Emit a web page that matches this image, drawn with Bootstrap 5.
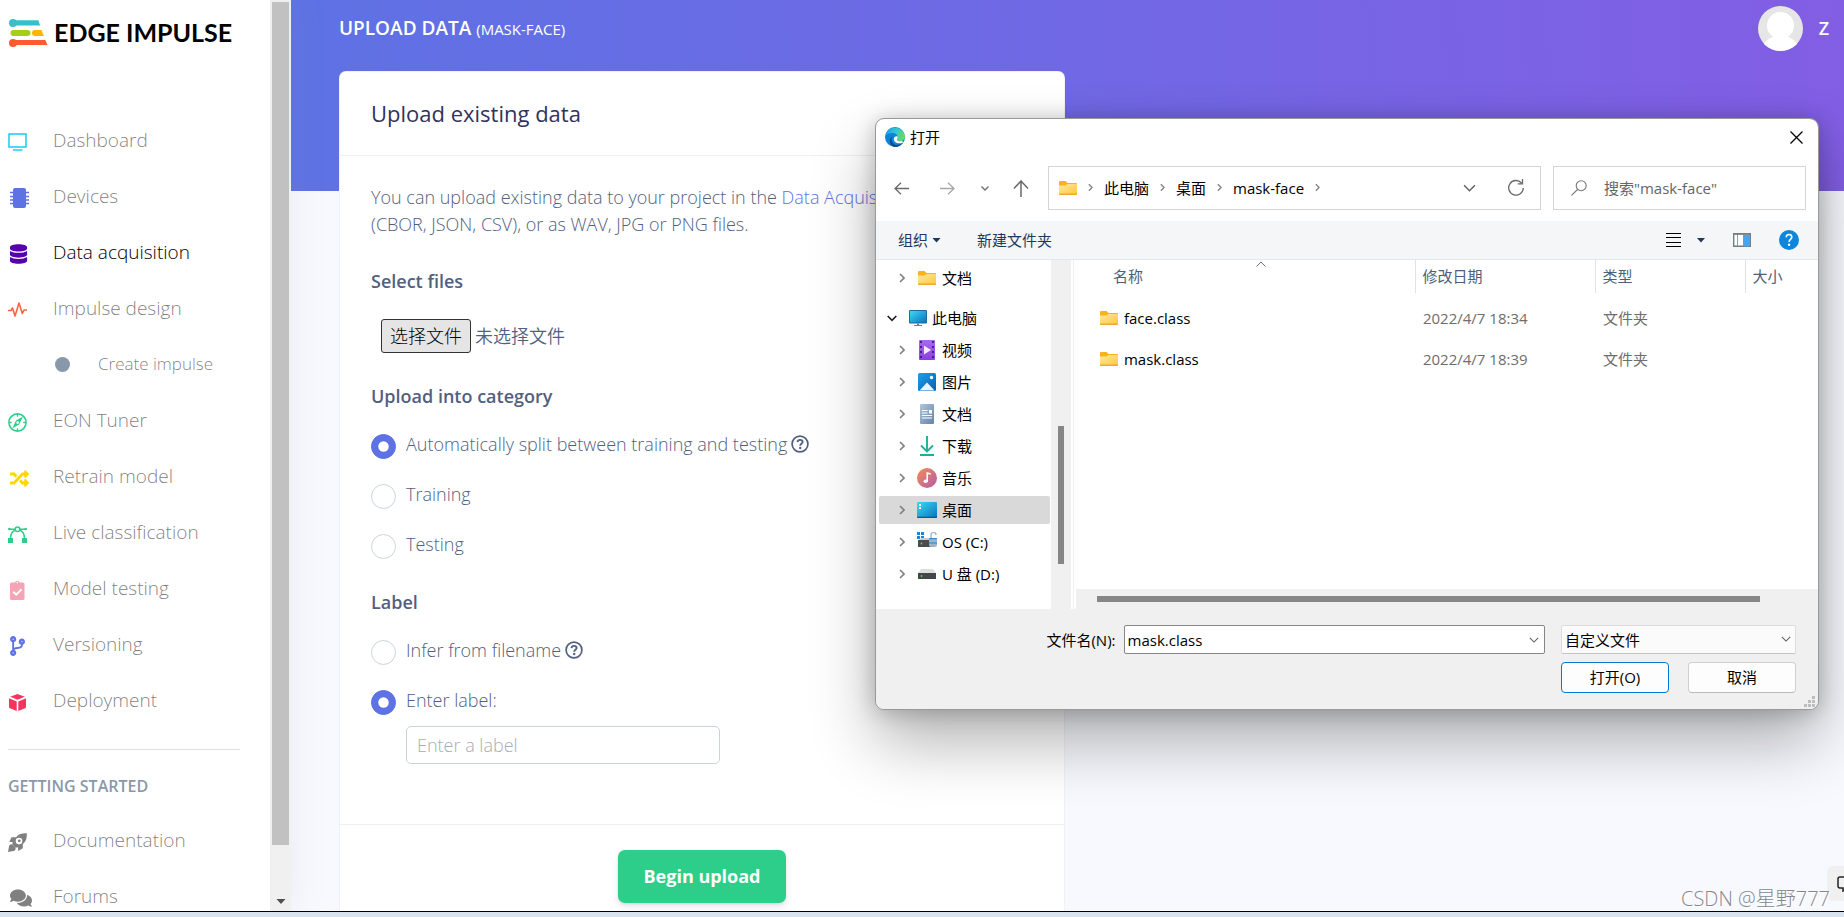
<!DOCTYPE html>
<html lang="en">
<head>
<meta charset="utf-8">
<meta name="viewport" content="width=device-width, initial-scale=1">
<title>Upload data - Edge Impulse</title>
<link rel="stylesheet" href="https://cdn.jsdelivr.net/npm/bootstrap@5.3.0/dist/css/bootstrap.min.css">
<style>
  body { font-family: "Open Sans", "Noto Sans CJK SC", sans-serif; font-size: 18px; line-height: 27px; color: #525f7f; background: #f8f9fe; }
  svg { display: block; flex: none; }
  a { text-decoration: none; }

  /* Sidebar */
  .side { width: 270px; background: #fff; }
  .side-wrap { box-shadow: 0 0 32px rgba(136,152,170,.15); z-index: 2; }
  .brand { height: 65px; padding-left: 8px; color: #000; font: 700 25px/65px Lato, sans-serif; gap: 6px; }
  .side-list { padding: 47px 0 0 8px; }
  .side-link { height: 56px; color: rgba(0,0,0,.52); font-size: 19px; font-weight: 300; }
  .side-link.current { color: #000; }
  .side-link .pic { width: 45px; padding-top: 4px; }
  .side-link.sub { font-size: 17px; padding: 0 0 2px 47px; }
  .side-link.sub .pic { width: 43px; padding-top: 2px; }
  .side-rule { margin: 21px 30px 0 8px; border-top: 1px solid #dfdfdf; }
  .side-head { margin: 0; padding: 27px 0 0 8px; font-size: 16px; line-height: 18px; font-weight: 600; color: #8898aa; }
  .side-more { padding: 17px 0 0 8px; }
  .track { width: 21px; background: #f0f0f0; padding: 2px 2px 3px; }
  .thumb { background: #c1c1c1; height: 93%; }

  /* Main area */
  .hero { height: 191px; background: linear-gradient(87deg, #5e72e4 0, #825ee4 100%); }
  .topbar { height: 56px; padding: 0 15px 0 48px; color: #fff; }
  .page-title { font-size: 19px; font-weight: 600; margin: 0; }
  .page-title small { font-size: 15px; font-weight: 400; }
  .content { padding: 0 23px 0 48px; margin-top: -120px; }
  .content > .row { --bs-gutter-x: 30px; }
  .panel { --bs-card-border-color: rgba(0,0,0,.05); --bs-card-border-radius: 7px; --bs-card-inner-border-radius: 6px; border-bottom: 0; }
  .panel .card-header { background: #fff; padding: 27px 31px; border-color: #f0f0f0; }
  .panel .card-header h2 { font-size: 22px; line-height: 29px; font-weight: 500; color: #32325d; margin: 0; }
  .panel .card-body { padding: 28px 31px 60px; font-weight: 350; }
  .panel .card-footer { background: #fff; border-color: #f0f0f0; padding: 25px 0 40px; }
  .panel h3 { font-size: 18px; line-height: 27px; font-weight: 550; margin: 30px 0 21px; color: #525f7f; }
  .panel a { color: #5e72e4; }
  .picker { margin: 24px 0 0 10px; }
  .pick { font-size: 18px; font-weight: 300; line-height: 24px; border: 1px solid #333; border-radius: 3px; background: #e5e5e5; color: #000; padding: 4px 8px; }
  .option { gap: 10px; height: 50px; }
  .option.last { height: 39px; }
  .option .form-check-input { width: 25px; height: 25px; margin: 3px 0 0; border-color: #ced4da; }
  .option .form-check-input:checked { background-color: #5e72e4; border-color: #5e72e4; background-size: 21px; }
  .hint { margin-left: -6px; }
  .label-box { margin-left: 35px; width: 314px; height: 38px; border: 1px solid #cad1d7; border-radius: 5px; font-size: 18px; font-weight: 350; padding: 0 10px; }
  .label-box::placeholder { color: #a6aeb6; opacity: 1; }
  .btn-go { background: #2dce89; color: #fff; font-weight: 700; font-size: 18px; line-height: 27px; padding: 13px 25px; border: 0; border-radius: 7px; box-shadow: 0 4px 6px rgba(50,50,93,.11), 0 1px 3px rgba(0,0,0,.08); }
  .desk { height: 6px; background: #d9e3ef; border-top: 1px solid #000; z-index: 3; }

  /* File dialog */
  .dlg { position: absolute; z-index: 5; top: 118px; left: 47.45vw; right: 25px; border: 1px solid #999; border-radius: 9px; background: #fff; color: #000; font-size: 15px; line-height: 20px; box-shadow: 0 32px 64px rgba(0,0,0,.3), 0 2px 21px rgba(0,0,0,.22); background-clip: padding-box; }
  .dlg button { border: 0; background: none; padding: 0; color: inherit; }
  .dlg-title { height: 37px; padding: 0 15px 1px 9px; gap: 5px; }
  .dlg-nav { padding: 10px 12px 11px 3px; }
  .w46 { width: 46px; } .w28 { width: 28px; } .w44 { width: 44px; }
  .addr, .find { height: 44px; border: 1px solid #d5d5d5; }
  .addr { margin-left: 5px; padding: 0 16px 1px 10px; }
  .addr ol { gap: 11px; }
  .find { width: 253px; margin-left: 12px; padding-left: 17px; gap: 17px; }
  .find input { border: 0; outline: 0; min-width: 0; padding: 0; color: #666; }
  .find input::placeholder { color: #666; opacity: 1; }
  .tools { height: 39px; background: #f4f6f8; border-bottom: 1px solid #e4e7ea; padding: 0 19px 0 22px; color: #1e395b; }
  .panes { height: 349px; }
  .tree { width: 175px; padding: 2px 1px 0 3px; }
  .tree li { height: 32px; padding: 2px 0; }
  .tree li.root { margin-top: 8px; }
  .tree a { height: 28px; color: #000; padding-left: 20px; border-radius: 2px; gap: 5px; }
  .tree .root a { padding-left: 8px; }
  .tree a > svg:first-child { margin-right: 7px; }
  .tree a.on { background: #d9d9d9; }
  .vbar { width: 20px; background: #f0f0f0; padding: 166px 7px 45px; margin-right: 2px; }
  .bar { background: #868686; }
  .files { border-left: 1px solid #f0f0f0; padding-left: 2px; min-width: 0; }
  .files table { table-layout: fixed; width: 100%; }
  .files th { height: 33px; padding: 0 0 2px 6px; font-weight: 400; color: #4c607a; border-left: 1px solid #e2e2e2; white-space: nowrap; }
  .files th:first-child { border: 0; padding-left: 37px; position: relative; }
  .sort { position: absolute; left: 53%; top: 1px; }
  .files tbody::before { content: ""; display: block; height: 5px; }
  .files td { height: 41px; padding: 0 0 2px 7px; color: #6d6d6d; }
  .files td:first-child { padding-left: 24px; color: #000; }
  .file-name { gap: 6px; }
  .c-name { width: 340px; } .c-date { width: 180px; } .c-type { width: 150px; }
  .hbar { height: 20px; background: #f0f0f0; padding: 7px 58px 7px 21px; }
  .dlg-foot { background: #f0f0f0; border-radius: 0 0 8px 8px; padding: 16px 22px 16px 0; gap: 8px; }
  .side-col { width: 235px; }
  .fname, .ftype { height: 29px; border-radius: 2px; font-size: 15px; }
  .fname { width: 63%; border: 1px solid #868686; background: #fff; }
  .fname input { border: 0; outline: 0; padding: 0 3px; min-width: 0; background: none; }
  .ftype { border: 1px solid #dcdcdc; border-bottom-color: #c4c4c4; background: #fbfbfb; padding: 0 3px; appearance: none; width: 100%; color: #000; }
  .chev { position: absolute; right: 5px; top: 11px; pointer-events: none; }
  .dlg .push { width: 108px; height: 31px; background: #fdfdfd; border: 1px solid #d0d0d0; border-bottom-color: #bbb; border-radius: 4px; padding-bottom: 2px; }
  .dlg .push.main { border-color: #0078d4; }
  .grip { position: absolute; right: 3px; bottom: 2px; }
  .mark-text { position: absolute; z-index: 6; right: 14px; bottom: 5px; color: #85878c; font: 300 20px/27px "Open Sans", "Noto Sans CJK SC", sans-serif; text-shadow: 1px 1px 0 #fff; }
  .chat { position: absolute; z-index: 4; right: 0; bottom: 16px; width: 17px; height: 35px; background: #f0f0f0; border: 0; border-radius: 6px 0 0 6px; padding: 0 0 0 10px; overflow: hidden; }
</style>
</head>
<body>
<svg width="0" height="0" class="position-absolute" aria-hidden="true">
  <defs>
    <linearGradient id="gFold" x1="0" y1="0" x2="1" y2="1"><stop offset="0" stop-color="#ffe9a2"/><stop offset="1" stop-color="#fdc73a"/></linearGradient>
    <linearGradient id="gBlue" x1="0" y1="0" x2="1" y2="1"><stop offset="0" stop-color="#37dcec"/><stop offset="1" stop-color="#0f6fc5"/></linearGradient>
    <linearGradient id="gPic" x1="0" y1="0" x2="1" y2="1"><stop offset="0" stop-color="#1ba0ea"/><stop offset="1" stop-color="#0a5fae"/></linearGradient>
    <linearGradient id="gVid" x1="0" y1="0" x2="0" y2="1"><stop offset="0" stop-color="#a868f2"/><stop offset="1" stop-color="#8a3fe0"/></linearGradient>
    <linearGradient id="gDoc" x1="0" y1="0" x2="1" y2="1"><stop offset="0" stop-color="#b2c6da"/><stop offset="1" stop-color="#6483a6"/></linearGradient>
    <linearGradient id="gMus" x1="0" y1="0" x2="1" y2="1"><stop offset="0" stop-color="#f58d52"/><stop offset="1" stop-color="#b15cae"/></linearGradient>
    <linearGradient id="gEdge" x1="0" y1=".3" x2="1" y2=".6"><stop offset="0" stop-color="#1fa5e4"/><stop offset=".5" stop-color="#35c5d6"/><stop offset="1" stop-color="#6be04a"/></linearGradient>
    <symbol id="i-next" viewBox="0 0 6 10"><path d="M1 1l4 4-4 4" fill="none" stroke="#808080" stroke-width="1.6"/></symbol>
    <symbol id="i-down" viewBox="0 0 12 7"><path d="M1 1l5 5 5-5" fill="none" stroke="#606060" stroke-width="1.3"/></symbol>
    <symbol id="i-folder" viewBox="0 0 18 14"><path d="M0 1a1 1 0 0 1 1-1h5.500l2 2H17a1 1 0 0 1 1 1v4H0z" fill="#f8b31a"/><path d="M0 4.500h6.500l2-1.500H17a1 1 0 0 1 1 1v9a1 1 0 0 1-1 1H1a1 1 0 0 1-1-1z" fill="url(#gFold)"/><path d="M0 12.600h18v.4a1 1 0 0 1-1 1H1a1 1 0 0 1-1-1z" fill="#eeaa2c"/></symbol>
    <symbol id="i-help" viewBox="0 0 18 18"><circle cx="9" cy="9" r="7.900" fill="none" stroke="#525f7f" stroke-width="1.700"/><path d="M6.500 7.100C6.700 5.600 7.700 4.900 9 4.900c1.500 0 2.600.9 2.600 2.200C11.600 8.800 9.200 8.900 9.200 10.700" fill="none" stroke="#525f7f" stroke-width="1.900"/><circle cx="9.200" cy="13" r="1.200" fill="#525f7f"/></symbol>
  </defs>
</svg>

<div class="vh-100 d-flex flex-column overflow-hidden position-relative">
  <div class="d-flex flex-fill overflow-hidden">

    <div class="side-wrap d-flex flex-shrink-0 position-relative">
      <nav class="side overflow-hidden" aria-label="Project">
        <a href="#" class="brand d-flex align-items-center">
          <svg width="40" height="28" viewBox="0 0 40 28"><g fill="#39bfcc"><circle cx="5" cy="4" r="4"/><path d="M5 1.300h25.300L32.200 6.500H5z"/></g><rect x="2.500" y="11" width="20" height="6" rx="3" fill="#a5cf13"/><path d="M27 11h6.500l2.300 6H27a3 3 0 0 1 0-6z" fill="#ffb400"/><g fill="#ff5a30"><circle cx="5" cy="24" r="4"/><path d="M5 21h32.300l2.200 5H5z"/></g></svg>
          <span>EDGE IMPULSE</span>
        </a>
        <div class="side-list">
          <a href="#" class="side-link d-flex align-items-center"><span class="pic"><svg width="19" height="18" viewBox="0 0 19 18"><path d="M1 1h17v13H1z" fill="none" stroke="#11cdef" stroke-width="1.500"/><path d="M5 17h9.500" stroke="#11cdef" stroke-width="1.400"/></svg></span>Dashboard</a>
          <a href="#" class="side-link d-flex align-items-center"><span class="pic"><svg width="22" height="20" viewBox="0 0 22 20"><rect x="5" y="0" width="13" height="20" rx="2" fill="#5e72e4"/><path d="M2 4.500h3M2 8.500h3M2 12h3M2 15.500h3M18 4.500h3M18 8.500h3M18 12h3M18 15.500h3" stroke="#5e72e4" stroke-width="1.400"/></svg></span>Devices</a>
          <a href="#" class="side-link current d-flex align-items-center"><span class="pic"><svg width="21" height="20" viewBox="-52 0 550 512"><path fill="#5603ad" d="M448 73.143v45.714C448 159.143 347.667 192 224 192S0 159.143 0 118.857V73.143C0 32.857 100.333 0 224 0s224 32.857 224 73.143zM448 176v102.857C448 319.143 347.667 352 224 352S0 319.143 0 278.857V176c48.125 33.143 136.208 48.572 224 48.572S399.874 209.143 448 176zm0 160v102.857C448 479.143 347.667 512 224 512S0 479.143 0 438.857V336c48.125 33.143 136.208 48.572 224 48.572S399.874 369.143 448 336z"/></svg></span>Data acquisition</a>
          <a href="#" class="side-link d-flex align-items-center"><span class="pic"><svg width="19" height="16" viewBox="0 0 19 16"><path d="M0 8.500h3L4.500 6 7 14l4-13 3.300 10.500L16 8h3" fill="none" stroke="#fb6340" stroke-width="1.600" stroke-linejoin="round"/></svg></span>Impulse design</a>
          <a href="#" class="side-link sub d-flex align-items-center"><span class="pic"><svg width="15" height="15" viewBox="0 0 15 15"><circle cx="7.500" cy="7.500" r="7.500" fill="#8898aa"/></svg></span>Create impulse</a>
          <a href="#" class="side-link d-flex align-items-center"><span class="pic"><svg width="19" height="19" viewBox="0 0 19 19"><circle cx="9.500" cy="9.500" r="8.600" fill="none" stroke="#2dce89" stroke-width="1.600"/><path d="M9.500 1.500v2.200M9.500 15.300v2.200M1.500 9.500h2.200M15.300 9.500h2.200" stroke="#2dce89" stroke-width="1.300"/><path fill-rule="evenodd" d="M15 3.500l-3.800 8L4.300 15.300 8 7.500zM9.600 8.300a1.300 1.300 0 1 0 .1 2.600 1.300 1.300 0 0 0-.1-2.600z" fill="#2dce89"/></svg></span>EON Tuner</a>
          <a href="#" class="side-link d-flex align-items-center"><span class="pic"><svg width="21" height="19" viewBox="-52 0 564 512"><path fill="#ffd600" d="M504.971 359.029c9.373 9.373 9.373 24.569 0 33.941l-80 79.984c-15.010 15.010-40.971 4.490-40.971-16.971V416h-58.785a12.004 12.004 0 0 1-8.773-3.812l-70.556-75.596 53.333-57.143L352 336h32v-39.981c0-21.438 25.943-31.998 40.971-16.971l80 79.981zM12 176h84l52.781 56.551 53.333-57.143-70.556-75.596A11.999 11.999 0 0 0 122.785 96H12c-6.627 0-12 5.373-12 12v56c0 6.627 5.373 12 12 12zm372 0v39.984c0 21.460 25.961 31.980 40.971 16.971l80-79.984c9.373-9.373 9.373-24.569 0-33.941l-80-79.981C409.943 24.021 384 34.582 384 56.019V96h-58.785a12.004 12.004 0 0 0-8.773 3.812L96 336H12c-6.627 0-12 5.373-12 12v56c0 6.627 5.373 12 12 12h110.785c3.326 0 6.503-1.381 8.773-3.812L352 176h32z"/></svg></span>Retrain model</a>
          <a href="#" class="side-link d-flex align-items-center"><span class="pic"><svg width="19" height="17" viewBox="0 0 19 17"><g fill="#2dce89"><path d="M0 12h5v5H0zM14 12h5v5h-5z"/><circle cx="1.300" cy="3" r="1.300"/><circle cx="17.700" cy="3" r="1.300"/></g><g fill="none" stroke="#2dce89" stroke-width="1.500"><path d="M2 3.200h5M12 3.200h5M2.500 12c.2-4 2-7 5-8M16.500 12c-.2-4-2-7-5-8"/><circle cx="9.500" cy="3.200" r="2.300"/></g></svg></span>Live classification</a>
          <a href="#" class="side-link d-flex align-items-center"><span class="pic"><svg width="18" height="20" viewBox="0 0 18 20"><path fill-rule="evenodd" fill="#f3a4b5" d="M3.500 2.500H7a2.300 2.300 0 0 1 4.500 0H15A1.500 1.500 0 0 1 16.500 4v14.500A1.500 1.500 0 0 1 15 20H3.500A1.500 1.500 0 0 1 2 18.500V4a1.500 1.500 0 0 1 1.500-1.500zM9.200 1.800a.8.8 0 1 0 0 1.600.8.8 0 0 0 0-1.600z"/><path d="M5.200 11.700l3 3 5.400-5.500" fill="none" stroke="#fff" stroke-width="2"/></svg></span>Model testing</a>
          <a href="#" class="side-link d-flex align-items-center"><span class="pic"><svg width="17" height="20" viewBox="-52 0 436 512"><path fill="#5e72e4" d="M384 144c0-44.200-35.800-80-80-80s-80 35.800-80 80c0 36.400 24.300 67.100 57.500 76.800-.6 16.100-4.200 28.500-11 36.900-15.400 19.200-49.300 22.400-85.200 25.700-28.200 2.600-57.400 5.400-81.300 16.900v-144c32.500-10.200 56-40.500 56-76.300 0-44.200-35.800-80-80-80S0 35.800 0 80c0 35.800 23.500 66.100 56 76.300v199.300C23.500 365.900 0 396.200 0 432c0 44.200 35.800 80 80 80s80-35.800 80-80c0-34-21.200-63.100-51.200-74.600 3.100-5.200 7.800-9.800 14.900-13.400 16.200-8.200 40.400-10.400 66.100-12.800 42.200-3.900 90-8.400 118.200-43.400 14-17.400 21.100-39.800 21.600-67.900 31.600-10.800 54.400-40.700 54.400-75.900zM80 64c8.800 0 16 7.200 16 16s-7.200 16-16 16-16-7.200-16-16 7.200-16 16-16zm0 384c-8.800 0-16-7.200-16-16s7.200-16 16-16 16 7.200 16 16-7.200 16-16 16zm224-320c8.800 0 16 7.200 16 16s-7.200 16-16 16-16-7.200-16-16 7.200-16 16-16z"/></svg></span>Versioning</a>
          <a href="#" class="side-link d-flex align-items-center"><span class="pic"><svg width="19" height="17" viewBox="0 0 19 17"><g fill="#f5365c"><path d="M9.500 0l7.300 2.800-7.300 3L2.200 2.800z"/><path d="M1 4.300l7.700 3.100V17L2 14.200a1.600 1.600 0 0 1-1-1.500z"/><path d="M18 4.300l-7.700 3.100V17l6.700-2.800a1.600 1.600 0 0 0 1-1.500z"/></g></svg></span>Deployment</a>
        </div>
        <div class="side-rule"></div>
        <h6 class="side-head">GETTING STARTED</h6>
        <div class="side-more">
          <a href="#" class="side-link d-flex align-items-center"><span class="pic"><svg width="19" height="19" viewBox="0 0 19 19"><path fill-rule="evenodd" fill="#808080" d="M18.800.2C14 .1 11 .8 8 4.300H3.500L1.300 9l3.400-.1-.4 2.600 3.200 3.200 2.600-.5V18l4.700-2.700V11c3.600-3 4.200-6.500 4-10.800zM11 4.800a3.300 3.300 0 1 1 0 6.600 3.300 3.300 0 0 1 0-6.600z"/><circle cx="11.300" cy="7.800" r="1.400" fill="#808080"/><path d="M4.600 11.800a2.300 2.300 0 0 0-3.600 1.700L0 19l5.500-1a2.300 2.300 0 0 0 1.700-3.600z" fill="#808080"/></svg></span>Documentation</a>
          <a href="#" class="side-link d-flex align-items-center"><span class="pic"><svg width="24" height="20" viewBox="-52 0 628 512"><path fill="#808080" d="M416 192c0-88.400-93.100-160-208-160S0 103.600 0 192c0 34.300 14.100 65.900 38 92-13.400 30.200-35.500 54.200-35.800 54.500-2.200 2.300-2.800 5.700-1.500 8.700S4.800 352 8 352c36.600 0 66.900-12.300 88.700-25 32.200 15.700 70.300 25 111.300 25 114.900 0 208-71.600 208-160zm122 220c23.900-26 38-57.700 38-92 0-66.900-53.500-124.200-129.300-148.100.9 6.600 1.300 13.300 1.300 20.100 0 105.900-107.700 192-240 192-10.800 0-21.300-.8-31.700-1.900C207.800 439.600 281.800 480 368 480c41 0 79.100-9.200 111.300-25 21.800 12.700 52.100 25 88.700 25 3.200 0 6.100-1.900 7.300-4.800 1.300-2.900.7-6.300-1.500-8.700-.3-.3-22.400-24.200-35.800-54.500z"/></svg></span>Forums</a>
        </div>
      </nav>
      <div class="track d-flex flex-column justify-content-between" aria-hidden="true">
        <div class="thumb"></div>
        <svg class="mx-auto" width="10" height="10" viewBox="0 0 10 10"><path d="M.5 1h9L5 6z" fill="#505050"/></svg>
      </div>
    </div>

    <main class="flex-fill overflow-hidden">
      <div class="hero">
        <div class="topbar d-flex align-items-center">
          <h1 class="page-title me-auto">UPLOAD DATA <small>(MASK-FACE)</small></h1>
          <a href="#" class="text-white fw-semibold d-flex align-items-center gap-3">
            <svg width="45" height="45" viewBox="0 0 45 45"><clipPath id="av"><circle cx="22.500" cy="22.500" r="22.500"/></clipPath><g clip-path="url(#av)"><path d="M0 0h45v45H0z" fill="#e6e6e6"/><circle cx="22.500" cy="19.500" r="13.500" fill="#fff"/><path d="M4 41c4-8 10-11 18.500-11S37 33 41 41v4H4z" fill="#fff"/></g></svg>
            <span>Z</span>
          </a>
        </div>
      </div>
      <div class="content position-relative">
        <div class="row">
          <div class="col-6">
            <form class="card panel">
              <div class="card-header"><h2>Upload existing data</h2></div>
              <div class="card-body">
                <p class="mb-0">You can upload existing data to your project in the <a href="#">Data Acquisition Format</a> (CBOR, JSON, CSV), or as WAV, JPG or PNG files.</p>
                <h3>Select files</h3>
                <div class="picker d-flex align-items-center gap-1">
                  <button type="button" class="pick">选择文件</button>
                  <span>未选择文件</span>
                  <input type="file" class="d-none" aria-label="Files">
                </div>
                <h3>Upload into category</h3>
                <div class="option d-flex"><input class="form-check-input" type="radio" name="cat" id="c1" checked><label for="c1">Automatically split between training and testing</label><a href="#" class="hint pt-1" aria-label="Help"><svg width="18" height="18"><use href="#i-help"/></svg></a></div>
                <div class="option d-flex"><input class="form-check-input" type="radio" name="cat" id="c2"><label for="c2">Training</label></div>
                <div class="option d-flex"><input class="form-check-input" type="radio" name="cat" id="c3"><label for="c3">Testing</label></div>
                <h3 class="mt-2">Label</h3>
                <div class="option d-flex"><input class="form-check-input" type="radio" name="lab" id="l1"><label for="l1">Infer from filename</label><a href="#" class="hint pt-1" aria-label="Help"><svg width="18" height="18"><use href="#i-help"/></svg></a></div>
                <div class="option last d-flex"><input class="form-check-input" type="radio" name="lab" id="l2" checked><label for="l2">Enter label:</label></div>
                <input type="text" class="label-box d-block" placeholder="Enter a label" aria-label="Label">
              </div>
              <div class="card-footer text-center"><button type="button" class="btn-go">Begin upload</button></div>
            </form>
          </div>
        </div>
      </div>
    </main>
  </div>
  <div class="desk flex-shrink-0"></div>

  <section class="dlg" role="dialog" aria-label="打开" lang="zh-CN">
    <div class="dlg-title d-flex align-items-center">
      <svg width="20" height="20" viewBox="0 0 20 20"><circle cx="10" cy="10" r="10" fill="#0a84d8"/><path d="M.3 8.500A10 10 0 0 1 20 9.500c0 3-2.300 4.700-5 4.700-2 0-3.200-.8-3.200-1.500 0-.6.900-.9.900-2.500C12.700 7.500 10 6 7.200 6 4 6 1.500 7.300.3 8.500z" fill="url(#gEdge)"/><path d="M7.500 9.500c-2 2.500-.8 8.500 4.500 8.500 3 0 5.300-1.500 6.500-3-2 4-6 5.500-9.500 4.900C4 18 3.500 11.500 7.500 9.500z" fill="#114a8b"/><path d="M12.700 10.300c0 1.500-.9 1.900-.9 2.400 0 1 2.200 2 5 1.400l1.600.8c-1.500 1.300-3.500 1.600-5.400 1.400-3-.3-4.800-3-4-5.500.5-1.500 3.700-2.500 3.700-.5z" fill="#fff"/></svg>
      <span class="me-auto">打开</span>
      <button type="button" aria-label="关闭"><svg width="13" height="13" viewBox="0 0 13 13"><path d="M.5.5l12 12M12.500.5l-12 12" stroke="#000" stroke-width="1.300"/></svg></button>
    </div>
    <div class="dlg-nav d-flex align-items-center">
      <button type="button" class="w46" aria-label="后退"><svg class="mx-auto" width="15" height="13" viewBox="0 0 15 13"><path d="M7 .7L1 6.500l6 5.800M1 6.500h14" fill="none" stroke="#6a6a6a" stroke-width="1.300"/></svg></button>
      <button type="button" class="w46" aria-label="前进"><svg class="mx-auto" width="15" height="13" viewBox="0 0 15 13"><path d="M8 .7l6 5.800-6 5.800M14 6.500H0" fill="none" stroke="#a8a8a8" stroke-width="1.300"/></svg></button>
      <button type="button" class="w28" aria-label="最近"><svg class="mx-auto" width="8" height="5" viewBox="0 0 8 5"><path d="M.5.5L4 4 7.500.5" fill="none" stroke="#707070" stroke-width="1.400"/></svg></button>
      <button type="button" class="w44" aria-label="向上"><svg class="mx-auto" width="16" height="17" viewBox="0 0 16 17"><path d="M1 8.500L8 1l7 7.500M8 1v16" fill="none" stroke="#6a6a6a" stroke-width="1.500"/></svg></button>
      <div class="addr flex-fill d-flex align-items-center">
        <ol class="list-unstyled d-flex align-items-center mb-0 me-auto">
          <li><svg width="18" height="14"><use href="#i-folder"/></svg></li>
          <li><svg width="5" height="9"><use href="#i-next"/></svg></li>
          <li>此电脑</li>
          <li><svg width="5" height="9"><use href="#i-next"/></svg></li>
          <li>桌面</li>
          <li><svg width="5" height="9"><use href="#i-next"/></svg></li>
          <li>mask-face</li>
          <li><svg width="5" height="9"><use href="#i-next"/></svg></li>
        </ol>
        <button type="button" class="me-4" aria-label="展开"><svg width="13" height="8"><use href="#i-down"/></svg></button>
        <button type="button" class="ms-2" aria-label="刷新"><svg width="16" height="17" viewBox="0 0 16 17"><path d="M15.300 9A7.300 7.300 0 1 1 13.500 4M14.500 0v4.800H9.800" fill="none" stroke="#6a6a6a" stroke-width="1.300"/></svg></button>
      </div>
      <div class="find d-flex align-items-center">
        <svg width="16" height="16" viewBox="0 0 16 16"><circle cx="10.200" cy="5.700" r="5" fill="none" stroke="#777" stroke-width="1.100"/><path d="M6.500 9.500L.5 15.300" stroke="#777" stroke-width="1.100"/></svg>
        <input type="text" placeholder='搜索"mask-face"' aria-label="搜索">
      </div>
    </div>
    <div class="tools d-flex align-items-center">
      <button type="button" class="d-flex align-items-center gap-1">组织 <svg width="9" height="5" viewBox="0 0 9 5"><path d="M.5 0h8l-4 4.500z" fill="#1e395b"/></svg></button>
      <button type="button" class="ms-4 ps-2 me-auto"><span class="ps-1">新建文件夹</span></button>
      <button type="button" class="d-flex align-items-center gap-3" aria-label="视图"><svg width="15" height="14" viewBox="0 0 15 14"><path d="M0 .5h15M0 4.500h15M0 9.500h15M0 13.500h15" stroke="#000" stroke-width="1"/></svg><svg width="8" height="5" viewBox="0 0 8 5"><path d="M0 0h8L4 4.500z" fill="#1e395b"/></svg></button>
      <button type="button" class="ms-4 ps-1" aria-label="预览"><svg width="18" height="14" viewBox="0 0 18 14"><path d="M.7.7h16.600v12.600H.7z" fill="#fff" stroke="#6f7f8a" stroke-width="1.400"/><path d="M4.500 1v12" stroke="#999" stroke-width="1"/><path d="M10 2h7v11.300h-7z" fill="#4ba3e8"/><path d="M1 1h16" stroke="#6f7f8a" stroke-width="1.500"/></svg></button>
      <button type="button" class="ms-4 ps-1" aria-label="帮助"><svg width="20" height="20" viewBox="0 0 20 20"><circle cx="10" cy="10" r="10" fill="#0e86dc"/><path d="M7.200 7.200C7.300 5.400 8.500 4.500 10 4.500s2.800 1 2.800 2.600c0 2.200-2.700 2.300-2.700 4.800" fill="none" stroke="#fff" stroke-width="1.600"/><circle cx="10.100" cy="14.700" r="1.200" fill="#fff"/></svg></button>
    </div>
    <div class="panes d-flex overflow-hidden">
      <ul class="tree list-unstyled mb-0 flex-shrink-0">
        <li><a href="#" class="d-flex align-items-center"><svg width="6" height="10"><use href="#i-next"/></svg><svg width="20" height="14"><use href="#i-folder"/></svg>文档</a></li>
        <li class="root"><a href="#" class="d-flex align-items-center"><svg width="10" height="7" viewBox="0 0 10 7"><path d="M.7 1L5 5.300 9.300 1" fill="none" stroke="#222" stroke-width="1.700"/></svg><svg width="18" height="16" viewBox="0 0 18 16"><rect width="18" height="13.500" rx="1" fill="#1b6d9c"/><path d="M1 1h16v11.500H1z" fill="url(#gBlue)"/><path d="M8 13.500h2V15h3v1H5v-1h3z" fill="#6d7f8a"/></svg><span>此电脑</span></a></li>
        <li><a href="#" class="d-flex align-items-center"><svg width="6" height="10"><use href="#i-next"/></svg><svg width="20" height="20" viewBox="0 0 20 20"><rect x="2" width="16" height="20" rx="1" fill="url(#gVid)"/><path d="M4 1v18M16 1v18" stroke="#45208a" stroke-width="2" stroke-dasharray="2 3"/><path d="M7 5.500l7 4.500-7 4.500z" fill="#f3eafd"/></svg>视频</a></li>
        <li><a href="#" class="d-flex align-items-center"><svg width="6" height="10"><use href="#i-next"/></svg><svg width="20" height="18" viewBox="0 0 20 18"><rect x="1" width="18" height="18" rx="1.500" fill="url(#gPic)"/><path d="M2.500 17.500L10 9.500l7.500 8z" fill="#eaf5fd"/><circle cx="14.500" cy="4.500" r="1.700" fill="#fff"/></svg>图片</a></li>
        <li><a href="#" class="d-flex align-items-center"><svg width="6" height="10"><use href="#i-next"/></svg><svg width="20" height="20" viewBox="0 0 20 20"><rect x="3" width="14" height="20" rx="1" fill="url(#gDoc)"/><path d="M5 6.500h5.500M5 9h5.500M5 11.500h10M5 14h10" stroke="#fff" stroke-width="1.200"/><path d="M12 6h3v3.500h-3z" fill="#fff"/></svg>文档</a></li>
        <li><a href="#" class="d-flex align-items-center"><svg width="6" height="10"><use href="#i-next"/></svg><svg width="20" height="20" viewBox="0 0 20 20"><path d="M10 0v15M4 9.500l6 6 6-6M3 19h14" fill="none" stroke="#1cb193" stroke-width="1.900"/></svg>下载</a></li>
        <li><a href="#" class="d-flex align-items-center"><svg width="6" height="10"><use href="#i-next"/></svg><svg width="20" height="20" viewBox="0 0 20 20"><circle cx="10" cy="10" r="10" fill="url(#gMus)"/><ellipse cx="8.700" cy="13.300" rx="2.200" ry="1.800" fill="#fff"/><path d="M10.200 13.500V5l3.500 1" fill="none" stroke="#fff" stroke-width="1.500"/></svg>音乐</a></li>
        <li><a href="#" class="on d-flex align-items-center"><svg width="6" height="10"><use href="#i-next"/></svg><svg width="20" height="16" viewBox="0 0 20 16"><rect width="20" height="16" rx="1" fill="url(#gBlue)"/><path d="M2 2h2v2H2zM2 5h2v2H2z" fill="#fff"/><path d="M0 14.700h20V15a1 1 0 0 1-1 1H1a1 1 0 0 1-1-1z" fill="#0d5597"/></svg>桌面</a></li>
        <li><a href="#" class="d-flex align-items-center"><svg width="6" height="10"><use href="#i-next"/></svg><svg width="20" height="20" viewBox="0 0 20 20"><path d="M0 0h3v3H0zM4 0h3v3H4zM0 4h3v3H0zM4 4h3v3H4z" fill="#1787dc"/><path d="M2 8l2-2h12l2 2z" fill="#c9ccce"/><path d="M1 8h17v7H1z" fill="#4a4c4e"/><circle cx="4.500" cy="11.500" r=".9" fill="#4be052"/><path d="M14 6V3c0-3.500 5-3.500 5 0" fill="none" stroke="#a7b7c4" stroke-width="1.400"/><rect x="12" y="6" width="8" height="9" rx="2" fill="#9fb3c4"/><path d="M12 6.700h8M12 11h8" stroke="#1787dc" stroke-width="1"/></svg>OS (C:)</a></li>
        <li><a href="#" class="d-flex align-items-center"><svg width="6" height="10"><use href="#i-next"/></svg><svg width="20" height="12" viewBox="0 0 20 12"><path d="M1 5l3-4h12l3 4z" fill="#dcdedf"/><path d="M1 5h18v6H1z" fill="#444648"/><circle cx="4.500" cy="8" r=".9" fill="#4be052"/></svg>U 盘 (D:)</a></li>
      </ul>
      <div class="vbar d-flex flex-shrink-0"><div class="bar flex-fill"></div></div>
      <div class="files flex-fill d-flex flex-column justify-content-between">
        <table>
          <colgroup><col class="c-name"><col class="c-date"><col class="c-type"><col></colgroup>
          <thead><tr><th>名称<svg class="sort" width="10" height="6" viewBox="0 0 10 6"><path d="M.5 5.500L5 1l4.500 4.500" fill="none" stroke="#707070"/></svg></th><th>修改日期</th><th>类型</th><th>大小</th></tr></thead>
          <tbody>
            <tr><td><span class="file-name d-flex align-items-center"><svg width="18" height="14"><use href="#i-folder"/></svg>face.class</span></td><td>2022/4/7 18:34</td><td>文件夹</td><td></td></tr>
            <tr><td><span class="file-name d-flex align-items-center"><svg width="18" height="14"><use href="#i-folder"/></svg>mask.class</span></td><td>2022/4/7 18:39</td><td>文件夹</td><td></td></tr>
          </tbody>
        </table>
        <div class="hbar d-flex"><div class="bar flex-fill"></div></div>
      </div>
    </div>
    <div class="dlg-foot d-flex flex-column">
      <div class="d-flex align-items-center justify-content-end gap-3">
        <div class="d-flex align-items-center gap-2 flex-fill justify-content-end">
          <label for="fn">文件名(N):</label>
          <div class="fname d-flex position-relative"><input id="fn" type="text" value="mask.class" class="flex-fill"><svg class="chev" width="10" height="6"><use href="#i-down"/></svg></div>
        </div>
        <div class="side-col position-relative">
          <select class="ftype" aria-label="文件类型"><option>自定义文件</option></select><svg class="chev" width="10" height="6"><use href="#i-down"/></svg>
        </div>
      </div>
      <div class="side-col ms-auto d-flex justify-content-between">
        <button type="button" class="push main">打开(O)</button>
        <button type="button" class="push">取消</button>
      </div>
    </div>
    <svg class="grip" width="11" height="11" viewBox="0 0 11 11"><path d="M8 0h3v3H8zM4 4h3v3H4zM8 4h3v3H8zM0 8h3v3H0zM4 8h3v3H4zM8 8h3v3H8z" fill="#bdbdbd"/></svg>
  </section>

  <button type="button" class="chat" aria-label="Chat"><svg width="18" height="17" viewBox="0 0 18 17"><path d="M3 2h14v11H9l-3 3v-3H3a2 2 0 0 1-2-2V4a2 2 0 0 1 2-2z" fill="none" stroke="#222" stroke-width="1.500"/></svg></button>
  <div class="mark-text">CSDN @星野777</div>
</div>
<script src="https://cdn.jsdelivr.net/npm/bootstrap@5.3.0/dist/js/bootstrap.bundle.min.js"></script>
</body>
</html>
